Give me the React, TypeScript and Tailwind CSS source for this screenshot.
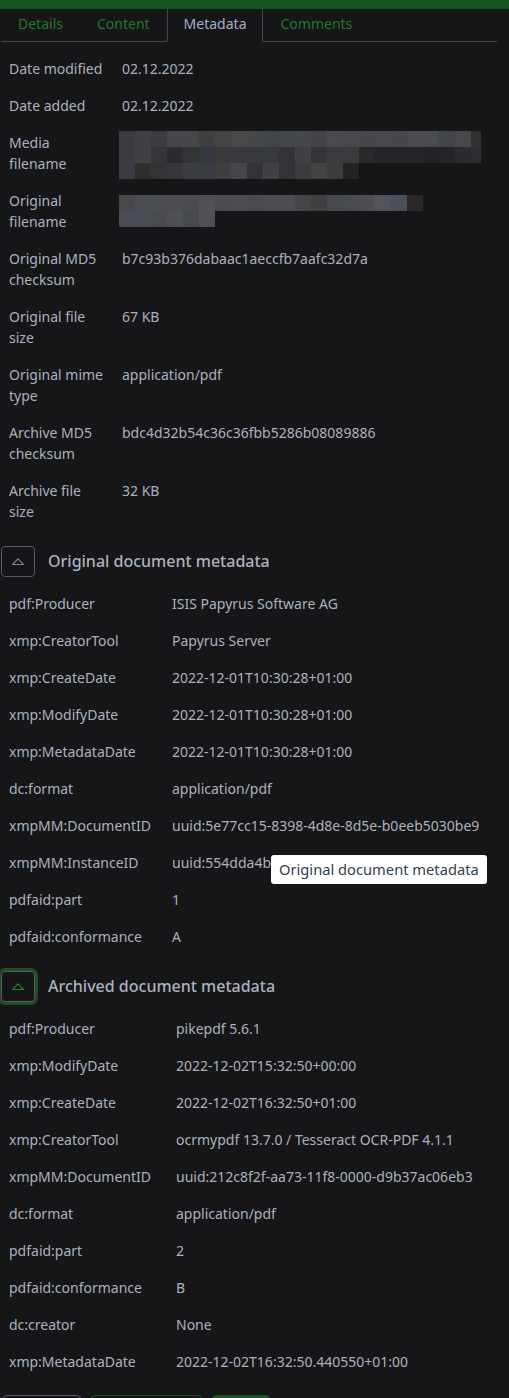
import React from 'react'

const caret = (
  <svg width="14" height="9" viewBox="0 0 14 9" fill="none">
    <path d="M1.5 7.5 L7 1.8 L12.5 7.5 Z" stroke="currentColor" strokeWidth="1.1" strokeLinejoin="round" />
  </svg>
)

// pixelated (redacted) filename blocks
const mediaBlocks = [
  ['#3b3c40', '#404148', '#3c3c3e', '#47474b', '#47474a', '#404043', '#454547', '#464949', '#474749', '#404547', '#44474a', '#44484a', '#434345', '#474a50', '#48484b', '#47474b', '#48494e', '#47474a', '#4a4b50', '#4a4a50', '#3f454b', '#48474a', '#2f3233'],
  ['#3a3c42', '#414144', '#353537', '#2b2c2f', '#333336', '#333740', '#3a3a3c', '#3a3a3e', '#38393c', '#37393d', '#333337', '#414144', '#343438', '#3b3a3d', '#3b3a3d', '#27292b', '#232427', '#242527', '#242527', '#232326', '#242427', '#2a2b2f', '#2d2e30'],
  ['#3b3c42', '#2e2e2f', '#333336', '#35363a', '#3c3d41', '#393c42', '#3f3f41', '#45464c', '#333238', '#3f4143', '#333337', '#3c3c3f', '#434346', '#3c3c3f', '#232326'],
]

const origBlocks = [
  ['#48484b', '#4a4d52', '#4b4c4f', '#4c4d50', '#4a4b51', '#505057', '#4a4b51', '#4c4c52', '#4a4a4e', '#4b4d52', '#4b4d52', '#464648', '#404043', '#46484b', '#474a4e', '#4d4d52', '#54555a', '#4a4f58', '#2d2827'],
  ['#4a4d55', '#4a4e55', '#4a4a4e', '#4d5055', '#48494d', '#505156'],
]

function Pixels({ rows }: { rows: string[][] }) {
  return (
    <div className="flex flex-col">
      {rows.map((row, i) => (
        <div key={i} className="flex h-4">
          {row.map((c, j) => (
            <div
              key={j}
              className={j === 22 ? 'h-4 w-[10px]' : 'h-4 w-4'}
              style={{ backgroundColor: c }}
            />
          ))}
        </div>
      ))}
    </div>
  )
}

const details: [string, React.ReactNode][] = [
  ['Date modified', '02.12.2022'],
  ['Date added', '02.12.2022'],
  ['Media filename', <div className="-ml-[3px] -mt-px h-[42px]"><Pixels rows={mediaBlocks} /></div>],
  ['Original filename', <div className="-ml-[3px] mt-[5px] h-[37px]"><Pixels rows={origBlocks} /></div>],
  ['Original MD5 checksum', 'b7c93b376dabaac1aeccfb7aafc32d7a'],
  ['Original file size', '67 KB'],
  ['Original mime type', 'application/pdf'],
  ['Archive MD5 checksum', 'bdc4d32b54c36c36fbb5286b08089886'],
  ['Archive file size', '32 KB'],
]

const originalMeta = [
  ['pdf:Producer', 'ISIS Papyrus Software AG'],
  ['xmp:CreatorTool', 'Papyrus Server'],
  ['xmp:CreateDate', '2022-12-01T10:30:28+01:00'],
  ['xmp:ModifyDate', '2022-12-01T10:30:28+01:00'],
  ['xmp:MetadataDate', '2022-12-01T10:30:28+01:00'],
  ['dc:format', 'application/pdf'],
  ['xmpMM:DocumentID', 'uuid:5e77cc15-8398-4d8e-8d5e-b0eeb5030be9'],
  ['xmpMM:InstanceID', 'uuid:554dda4b-2b56-4d4b-9d2a-4f1c2ad1e7a'],
  ['pdfaid:part', '1'],
  ['pdfaid:conformance', 'A'],
]

const archivedMeta = [
  ['pdf:Producer', 'pikepdf 5.6.1'],
  ['xmp:ModifyDate', '2022-12-02T15:32:50+00:00'],
  ['xmp:CreateDate', '2022-12-02T16:32:50+01:00'],
  ['xmp:CreatorTool', 'ocrmypdf 13.7.0 / Tesseract OCR-PDF 4.1.1'],
  ['xmpMM:DocumentID', 'uuid:212c8f2f-aa73-11f8-0000-d9b37ac06eb3'],
  ['dc:format', 'application/pdf'],
  ['pdfaid:part', '2'],
  ['pdfaid:conformance', 'B'],
  ['dc:creator', 'None'],
  ['xmp:MetadataDate', '2022-12-02T16:32:50.440550+01:00'],
]

function MetaTable({ rows, labelWidth }: { rows: string[][]; labelWidth: string }) {
  return (
    <div className="ml-px">
      {rows.map(([k, v]) => (
        <div key={k} className="flex">
          <div className={`${labelWidth} shrink-0 px-2 py-2`}>{k}</div>
          <div className="whitespace-nowrap px-2 py-2">{v}</div>
        </div>
      ))}
    </div>
  )
}

export default function App() {
  const tabs = ['Details', 'Content', 'Metadata', 'Comments']

  return (
    <div
      className="relative h-[1398px] w-full overflow-hidden bg-[#161618] text-[14px] leading-[21px] text-[#abb2bf]"
      style={{ fontFamily: '"Noto Sans", "Open Sans", sans-serif' }}
    >
      <div className="h-[9px] bg-[#17541f]" />

      {/* Tabs */}
      <div className="ml-px mr-[12px] flex border-b border-[#46464b]">
        {tabs.map((t) => (
          <div
            key={t}
            className={
              t === 'Metadata'
                ? '-mb-px border-x border-b border-[#46464b] border-b-[#161618] px-4 pt-[4px] pb-[7px] text-[#a3b0c6]'
                : '-mb-px border-x border-b border-transparent px-4 pt-[4px] pb-[7px] text-[#22792c]'
            }
          >
            {t}
          </div>
        ))}
      </div>

      {/* Document details */}
      <div className="ml-px mt-2">
        {details.map(([k, v]) => (
          <div key={k} className="flex">
            <div className="w-[113px] shrink-0 px-2 py-2">{k}</div>
            <div className="min-w-0 px-2 py-2">{v}</div>
          </div>
        ))}
      </div>

      {/* Original document metadata */}
      <div className="mt-4 mb-2 flex items-center text-[16px] font-medium">
        <button className="ml-px flex h-[31px] w-[34px] items-center justify-center rounded border border-[#595d63] text-[#7d8189]">
          {caret}
        </button>
        <span className="ml-[13px]">Original document metadata</span>
      </div>
      <div className="relative">
        <MetaTable rows={originalMeta} labelWidth="w-[163px]" />
        <div className="absolute left-[271px] top-[270px] rounded-[3px] bg-white px-2 py-1 text-[14.7px] text-[#334155] shadow">
          Original document metadata
        </div>
      </div>

      {/* Archived document metadata */}
      <div className="mt-4 mb-2 flex items-center text-[16px] font-medium">
        <button className="ml-px flex h-[31px] w-[34px] items-center justify-center rounded border border-[#595d63] text-[#1f8a2d] shadow-[0_0_0_3px_#1d4d23]">
          {caret}
        </button>
        <span className="ml-[13px]">Archived document metadata</span>
      </div>
      <MetaTable rows={archivedMeta} labelWidth="w-[167px]" />

      {/* Footer buttons (cut off) */}
      <div className="mt-[15px] flex gap-[10px] pl-[3px]">
        <div className="h-8 w-[78px] rounded border border-[#5a5e66]" />
        <div className="h-8 w-[111px] rounded border border-[#17541f]" />
        <div className="h-8 w-[58px] rounded border border-[#17541f] bg-[#17541f]" />
      </div>
    </div>
  )
}
